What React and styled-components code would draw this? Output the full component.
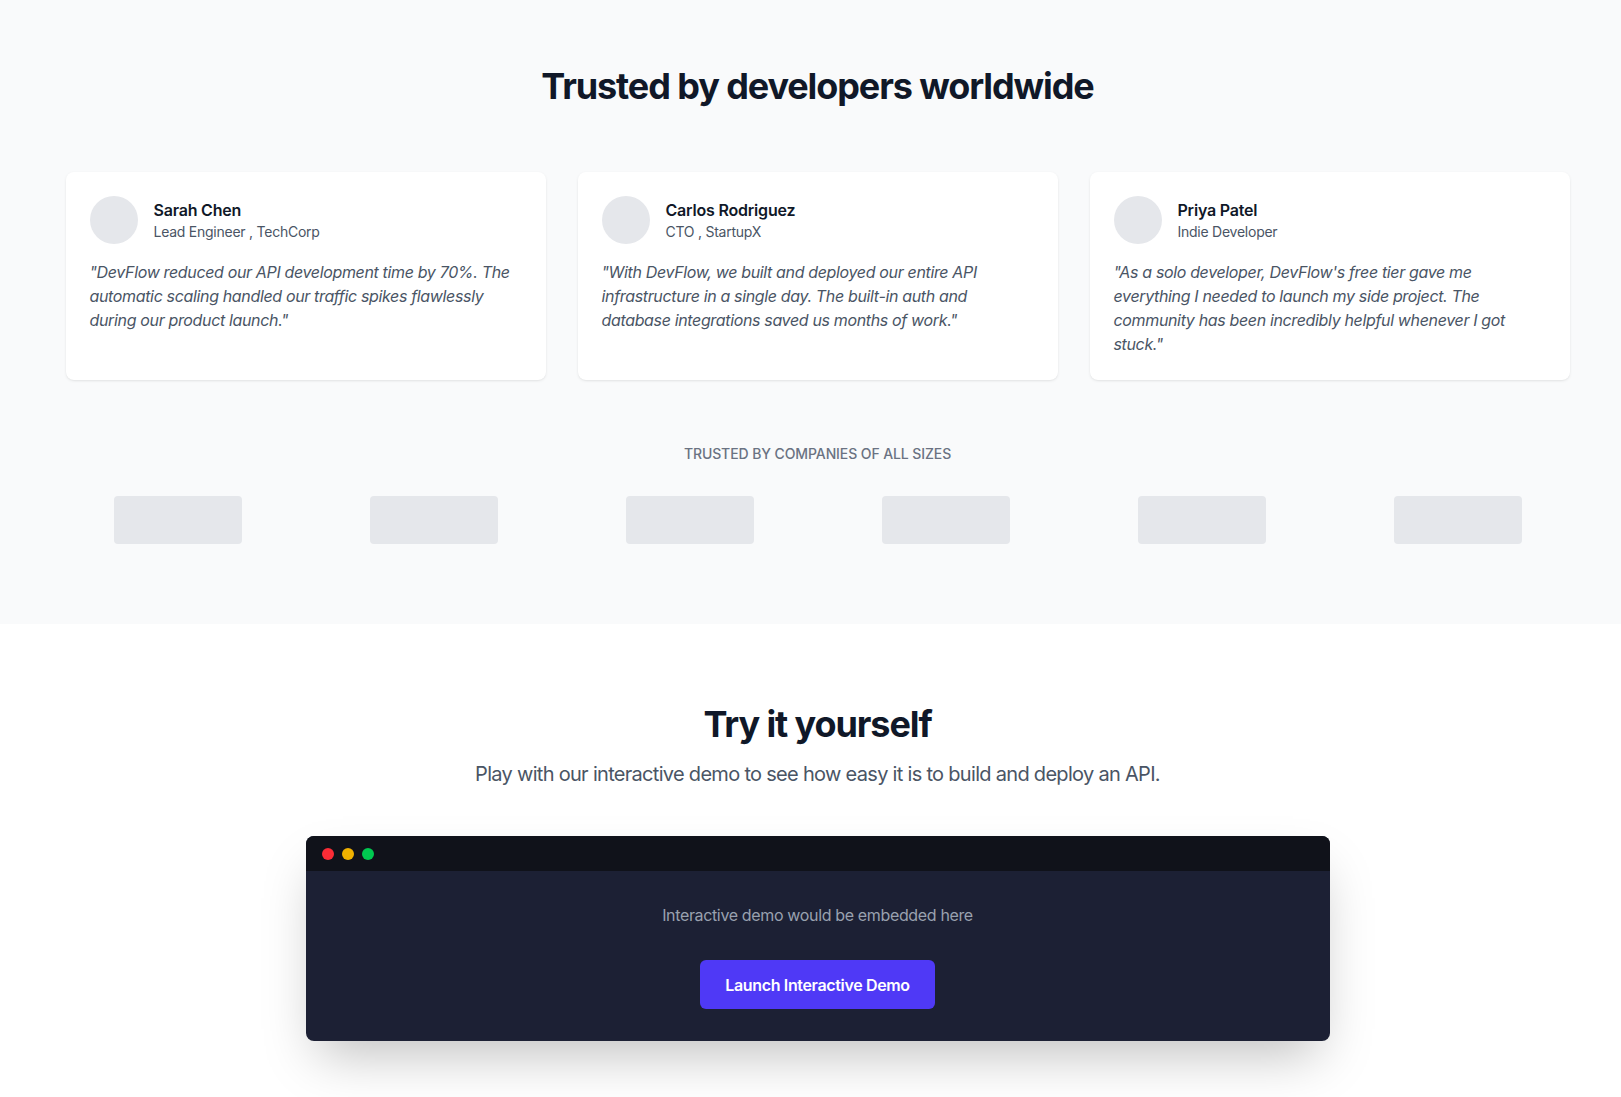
import React from 'react';
import styled, { createGlobalStyle } from 'styled-components';

const testimonials = [
    {
        name: 'Sarah Chen',
        role: 'Lead Engineer',
        company: 'TechCorp',
        quote: '"DevFlow reduced our API development time by 70%. The automatic scaling handled our traffic spikes flawlessly during our product launch."',
    },
    {
        name: 'Carlos Rodriguez',
        role: 'CTO',
        company: 'StartupX',
        quote: '"With DevFlow, we built and deployed our entire API infrastructure in a single day. The built-in auth and database integrations saved us months of work."',
    },
    {
        name: 'Priya Patel',
        role: 'Indie Developer',
        quote: '"As a solo developer, DevFlow\'s free tier gave me everything I needed to launch my side project. The community has been incredibly helpful whenever I got stuck."',
    },
];

const logos = [1, 2, 3, 4, 5, 6];

const GlobalStyle = createGlobalStyle`
    body {
        margin: 0;
        font-family: Inter, "Noto Sans", sans-serif;
        color: #101828;
        background: #fff;
    }
`;

const Section = styled.section`
    background: ${props => props.muted ? '#f9fafb' : '#fff'};
    padding: ${props => props.muted ? '66px 0 80px' : '80px 0 56px'};
    padding-left: 14px;
`;

const Container = styled.div`
    width: ${props => props.narrow ? '1024px' : '1504px'};
    margin: 0 auto;
    text-align: center;
`;

const Heading = styled.h2`
    margin: 0;
    font-size: 36px;
    line-height: 40px;
    font-weight: 700;
    letter-spacing: -1.1px;
    color: #101828;
`;

const Lead = styled.p`
    margin: 16px 0 48px;
    font-size: 20px;
    line-height: 28px;
    letter-spacing: -0.7px;
    color: #4a5565;
`;

const CardGrid = styled.div`
    display: grid;
    grid-template-columns: repeat(3, 1fr);
    gap: 32px;
    margin-top: 66px;
    text-align: left;
`;

const Card = styled.div`
    background: #fff;
    border-radius: 8px;
    padding: 24px;
    box-shadow: 0 1px 3px rgba(0, 0, 0, 0.08), 0 1px 2px -1px rgba(0, 0, 0, 0.08);
`;

const Person = styled.div`
    display: flex;
    align-items: center;
    gap: 16px;
    margin-bottom: 16px;
`;

const Avatar = styled.div`
    width: 48px;
    height: 48px;
    border-radius: 50%;
    background: #e5e7eb;
    flex-shrink: 0;
`;

const Name = styled.div`
    font-size: 16px;
    line-height: 24px;
    font-weight: 600;
    letter-spacing: -0.2px;
    color: #101828;
`;

const Role = styled.div`
    font-size: 14px;
    line-height: 20px;
    letter-spacing: -0.25px;
    color: #4a5565;
`;

const Quote = styled.p`
    margin: 0;
    font-size: 16px;
    line-height: 24px;
    font-style: italic;
    letter-spacing: -0.35px;
    color: #4a5565;
`;

const Caption = styled.p`
    margin: 64px 0 32px;
    font-size: 14px;
    line-height: 20px;
    font-weight: 500;
    letter-spacing: -0.1px;
    text-transform: uppercase;
    color: #6a7282;
`;

const LogoRow = styled.div`
    display: grid;
    grid-template-columns: repeat(6, 1fr);
    gap: 32px;
    justify-items: center;
`;

const LogoBox = styled.div`
    width: 128px;
    height: 48px;
    border-radius: 4px;
    background: #e5e7eb;
`;

const Window = styled.div`
    border-radius: 8px;
    overflow: hidden;
    background: #1c2034;
    box-shadow: 0 25px 50px -12px rgba(0, 0, 0, 0.25);
    text-align: center;
`;

const TitleBar = styled.div`
    display: flex;
    align-items: center;
    gap: 8px;
    height: 35px;
    padding: 0 16px;
    background: #10121a;
`;

const Dot = styled.span`
    width: 12px;
    height: 12px;
    border-radius: 50%;
    background: ${props => props.color};
`;

const DemoBody = styled.div`
    padding: 32px;
`;

const DemoText = styled.p`
    margin: 0 0 33px;
    font-size: 16px;
    line-height: 24px;
    letter-spacing: -0.35px;
    color: #99a1af;
`;

const LaunchButton = styled.button`
    border: none;
    border-radius: 6px;
    padding: 12px 24px;
    width: 235px;
    height: 49px;
    background: #4f39f6;
    color: #fff;
    font-family: inherit;
    font-size: 16px;
    font-weight: 600;
    line-height: 24px;
    letter-spacing: -0.35px;
    cursor: pointer;
`;

const App = () => (
    <>
        <GlobalStyle />
        <Section muted>
            <Container>
                <Heading>Trusted by developers worldwide</Heading>

                <CardGrid>
                    {testimonials.map(({name, role, company, quote}) => (
                        <Card key={name}>
                            <Person>
                                <Avatar />
                                <div>
                                    <Name>{name}</Name>
                                    <Role>{company ? `${role} , ${company}` : role}</Role>
                                </div>
                            </Person>
                            <Quote>{quote}</Quote>
                        </Card>
                    ))}
                </CardGrid>

                <Caption>Trusted by companies of all sizes</Caption>
                <LogoRow>
                    {logos.map(id => <LogoBox key={id} />)}
                </LogoRow>
            </Container>
        </Section>

        <Section>
            <Container>
                <Heading>Try it yourself</Heading>
                <Lead>Play with our interactive demo to see how easy it is to build and deploy an API.</Lead>
            </Container>
            <Container narrow>
                <Window>
                    <TitleBar>
                        <Dot color="#fb2c36" />
                        <Dot color="#f0b100" />
                        <Dot color="#00c950" />
                    </TitleBar>
                    <DemoBody>
                        <DemoText>Interactive demo would be embedded here</DemoText>
                        <LaunchButton>Launch Interactive Demo</LaunchButton>
                    </DemoBody>
                </Window>
            </Container>
        </Section>
    </>
);

export default App;
